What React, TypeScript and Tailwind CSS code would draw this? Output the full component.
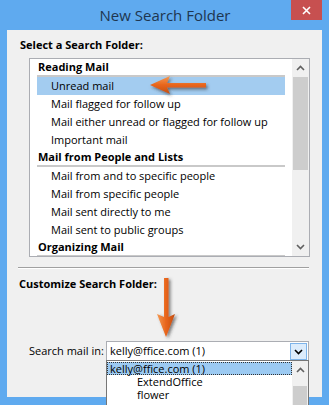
import React from "react";

const font = { fontFamily: '"Segoe UI", "Open Sans", "Noto Sans", sans-serif' };

function ChevronUp({ className = "" }: { className?: string }) {
  return (
    <svg width="9" height="6" viewBox="0 0 9 6" className={className}>
      <path d="M1 5 L4.5 1.5 L8 5" fill="none" stroke="currentColor" strokeWidth="1.6" />
    </svg>
  );
}

function ChevronDown({ className = "" }: { className?: string }) {
  return (
    <svg width="9" height="6" viewBox="0 0 9 6" className={className}>
      <path d="M1 1 L4.5 4.5 L8 1" fill="none" stroke="currentColor" strokeWidth="1.6" />
    </svg>
  );
}

// orange call-out arrows drawn over the dialog
function ArrowLeft() {
  return (
    <svg width="66" height="26" viewBox="0 0 66 26" className="absolute left-[146px] top-[73px]">
      <defs>
        <linearGradient id="hl" x1="0" y1="0" x2="0" y2="1">
          <stop offset="0" stopColor="#f59a52" />
          <stop offset="0.5" stopColor="#e8651c" />
          <stop offset="1" stopColor="#c24f10" />
        </linearGradient>
        <filter id="sh1" x="-20%" y="-50%" width="140%" height="200%">
          <feDropShadow dx="1.5" dy="2" stdDeviation="1.5" floodColor="#303030" floodOpacity="0.6" />
        </filter>
      </defs>
      <path d="M4 12 L24 3 L21 10 L60 10 L60 14.5 L21 14.5 L24 21 Z" fill="url(#hl)" filter="url(#sh1)" />
    </svg>
  );
}

function ArrowDown() {
  return (
    <svg width="26" height="66" viewBox="0 0 26 66" className="absolute left-[153px] top-[275px]">
      <defs>
        <linearGradient id="vl" x1="0" y1="0" x2="1" y2="0">
          <stop offset="0" stopColor="#f59a52" />
          <stop offset="0.5" stopColor="#e8651c" />
          <stop offset="1" stopColor="#c24f10" />
        </linearGradient>
        <filter id="sh2" x="-50%" y="-20%" width="200%" height="140%">
          <feDropShadow dx="2" dy="1.5" stdDeviation="1.5" floodColor="#303030" floodOpacity="0.6" />
        </filter>
      </defs>
      <path d="M11 3 L15.5 3 L15.5 42 L22 39 L13 62 L4 39 L11 42 Z" fill="url(#vl)" filter="url(#sh2)" />
    </svg>
  );
}

function Header({ label }: { label: string }) {
  return (
    <div>
      <div className="h-[16px] leading-[16px] pl-[1px] font-bold text-[11px] text-black whitespace-nowrap">
        {label}
      </div>
      <div className="h-[2px] bg-[#c9c9c9]" />
    </div>
  );
}

function Item({ label, selected = false }: { label: string; selected?: boolean }) {
  return (
    <div
      className={`h-[18px] leading-[18px] pl-[14px] text-[11px] text-black whitespace-nowrap ${selected ? "bg-[#a3ccf0]" : ""}`}
    >
      {label}
    </div>
  );
}

export default function App() {
  return (
    <div className="relative w-[329px] h-[405px] overflow-hidden bg-[#5faaef]" style={font}>
      {/* Title bar */}
      <div className="h-[30px] flex items-center justify-center">
        <span className="text-[15px] text-[#1e3650] pl-[1px]">New Search Folder</span>
      </div>
      <div className="absolute top-0 right-[7px] w-[31px] h-[20px] bg-[#c75050] flex items-center justify-center">
        <svg width="9" height="9" viewBox="0 0 9 9">
          <path d="M1 1 L8 8 M8 1 L1 8" stroke="#fff" strokeWidth="1.6" />
        </svg>
      </div>

      {/* Dialog body */}
      <div className="mx-[7px] h-[367px] bg-[#f0f0f0] flex flex-col">
        <div className="pt-[8px] pl-[13px] h-[22px] leading-[14px] font-bold text-[11px] text-black whitespace-nowrap">
          Select a Search Folder:
        </div>

        {/* folder list */}
        <div className="ml-[22px] mt-[6px] w-[281px] h-[199px] border border-[#abadb3] bg-white flex">
          <div className="flex-1 px-[7px] overflow-hidden">
            <Header label="Reading Mail" />
            <Item label="Unread mail" selected />
            <Item label="Mail flagged for follow up" />
            <Item label="Mail either unread or flagged for follow up" />
            <Item label="Important mail" />
            <Header label="Mail from People and Lists" />
            <Item label="Mail from and to specific people" />
            <Item label="Mail from specific people" />
            <Item label="Mail sent directly to me" />
            <Item label="Mail sent to public groups" />
            <Header label="Organizing Mail" />
          </div>
          <div className="w-[17px] bg-[#f0f0f0] flex flex-col items-center text-[#606060]">
            <div className="h-[18px] flex items-center justify-center">
              <ChevronUp />
            </div>
            <div className="w-[15px] h-[93px] bg-[#cdcdcd]" />
            <div className="flex-1" />
            <div className="h-[18px] flex items-center justify-center">
              <ChevronDown />
            </div>
          </div>
        </div>

        {/* etched separator */}
        <div className="ml-[11px] mt-[10px] w-[291px]">
          <div className="h-[1px] bg-[#a0a0a0]" />
          <div className="h-[1px] bg-white" />
        </div>

        <div className="pl-[12px] mt-[8px] h-[14px] leading-[14px] font-bold text-[11px] text-black whitespace-nowrap">
          Customize Search Folder:
        </div>

        <div className="mt-[50px] flex items-center">
          <span className="ml-[22px] w-[77px] text-[11px] text-black whitespace-nowrap">Search mail in:</span>
          <div className="w-[203px] h-[21px] border border-[#abadb3] bg-white flex items-center">
            <span className="flex-1 pl-[3px] text-[11px] text-black whitespace-nowrap">kelly@ffice.com (1)</span>
            <div className="w-[17px] h-[17px] mr-[1px] bg-[#dcecfc] border border-[#7eb4ea] flex items-center justify-center text-black">
              <ChevronDown />
            </div>
          </div>
        </div>
      </div>

      {/* opened drop-down */}
      <div className="absolute left-[106px] top-[360px] w-[203px] h-[50px] border border-[#767676] bg-white flex">
        <div className="flex-1 pt-[1px]">
          <div className="h-[13px] leading-[13px] pl-[3px] bg-[#9ccaf2] outline-1 outline-dotted outline-[#333] -outline-offset-1 text-[11px] text-black whitespace-nowrap">
            kelly@ffice.com (1)
          </div>
          <div className="h-[13px] leading-[13px] pl-[30px] text-[11px] text-black whitespace-nowrap">ExtendOffice</div>
          <div className="h-[13px] leading-[13px] pl-[30px] text-[11px] text-black whitespace-nowrap">flower</div>
        </div>
        <div className="w-[16px] bg-[#f0f0f0] flex flex-col items-center text-[#606060]">
          <div className="h-[18px] flex items-center justify-center">
            <ChevronUp />
          </div>
          <div className="h-[7px]" />
          <div className="w-[14px] flex-1 bg-[#cdcdcd]" />
        </div>
      </div>

      <ArrowLeft />
      <ArrowDown />
    </div>
  );
}
